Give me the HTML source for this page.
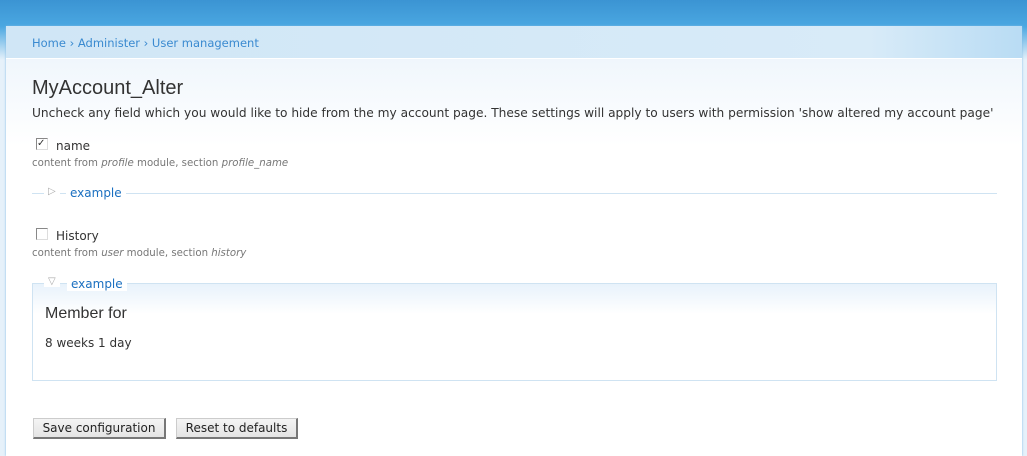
<!DOCTYPE html>
<html style="height:456px;overflow:hidden"><head><style>
body{margin:0;width:1027px;height:456px;overflow:hidden;background:linear-gradient(#3b94d3,#4aa7e1 26px,#e6f1fa 60px,#e6f1fa);font-family:"DejaVu Sans","Liberation Sans",sans-serif;color:#333;position:relative}
.panel{position:absolute;left:6px;top:26px;width:1016px;height:430px;background:linear-gradient(#eaf3fb,#fff 120px);box-shadow:0 0 2px #7bb8e4}
.bc{position:absolute;left:0;top:0;width:100%;height:32px;background:linear-gradient(90deg,#d0e6f6,#d8ebf8 85%,#b9dcf4);border-bottom:1px solid #fff;font-size:11.5px;color:#3a8ad0}
.t{position:absolute;white-space:nowrap}
.cb{position:absolute;width:10px;height:10px;border:1px solid #888;border-right-color:#ddd;border-bottom-color:#ddd;background:#fff;font-size:10px;line-height:10px}
.sm{font-size:10.2px;color:#777}
.lnk{color:#1a6fc0;font-size:12px}
.btn{position:absolute;top:418px;height:18px;background:linear-gradient(#f4f4f4,#e4e4e4);border:1px solid #ccc;border-right:2px solid #777;border-bottom:2px solid #777;font-size:12px;line-height:18px;text-align:center;color:#222}
</style></head><body>
<div class="panel"><div class="bc"><span class="t" style="left:26px;top:10px">Home › Administer › User management</span></div></div>
<div class="t" style="left:32px;top:77px;font-size:20px;color:#333;font-family:'Liberation Sans',sans-serif">MyAccount_Alter</div>
<div class="t" style="left:32px;top:106px;font-size:12.2px">Uncheck any field which you would like to hide from the my account page. These settings will apply to users with permission 'show altered my account page'</div>
<div class="cb" style="left:36px;top:138px">✓</div>
<div class="t" style="left:56px;top:139px;font-size:12px">name</div>
<div class="t sm" style="left:32px;top:158px">content from <i>profile</i> module, section <i>profile_name</i></div>
<div style="position:absolute;left:32px;top:193px;width:965px;height:1px;background:#cfe3f2"></div>
<div class="t" style="left:44px;top:186px;background:#fff;padding:0 4px;color:#aaa;font-size:10px">▷</div>
<div class="t lnk" style="left:66px;top:186px;background:#fff;padding:0 4px">example</div>
<div class="cb" style="left:36px;top:228px"></div>
<div class="t" style="left:56px;top:229px;font-size:12px">History</div>
<div class="t sm" style="left:32px;top:248px">content from <i>user</i> module, section <i>history</i></div>
<div style="position:absolute;left:32px;top:283px;width:963px;height:96px;border:1px solid #cfe3f2;background:linear-gradient(#e8f2fb,#fff 30px)"></div>
<div class="t" style="left:44px;top:276px;background:#fff;padding:0 4px;color:#aaa;font-size:10px">▽</div>
<div class="t lnk" style="left:67px;top:277px;background:#fff;padding:0 4px">example</div>
<div class="t" style="left:45px;top:305px;font-size:16px;color:#333;font-family:'Liberation Sans',sans-serif">Member for</div>
<div class="t" style="left:45px;top:336px;font-size:12px">8 weeks 1 day</div>
<div class="btn" style="left:33px;width:130px">Save configuration</div>
<div class="btn" style="left:176px;width:119px">Reset to defaults</div>
</body></html>
